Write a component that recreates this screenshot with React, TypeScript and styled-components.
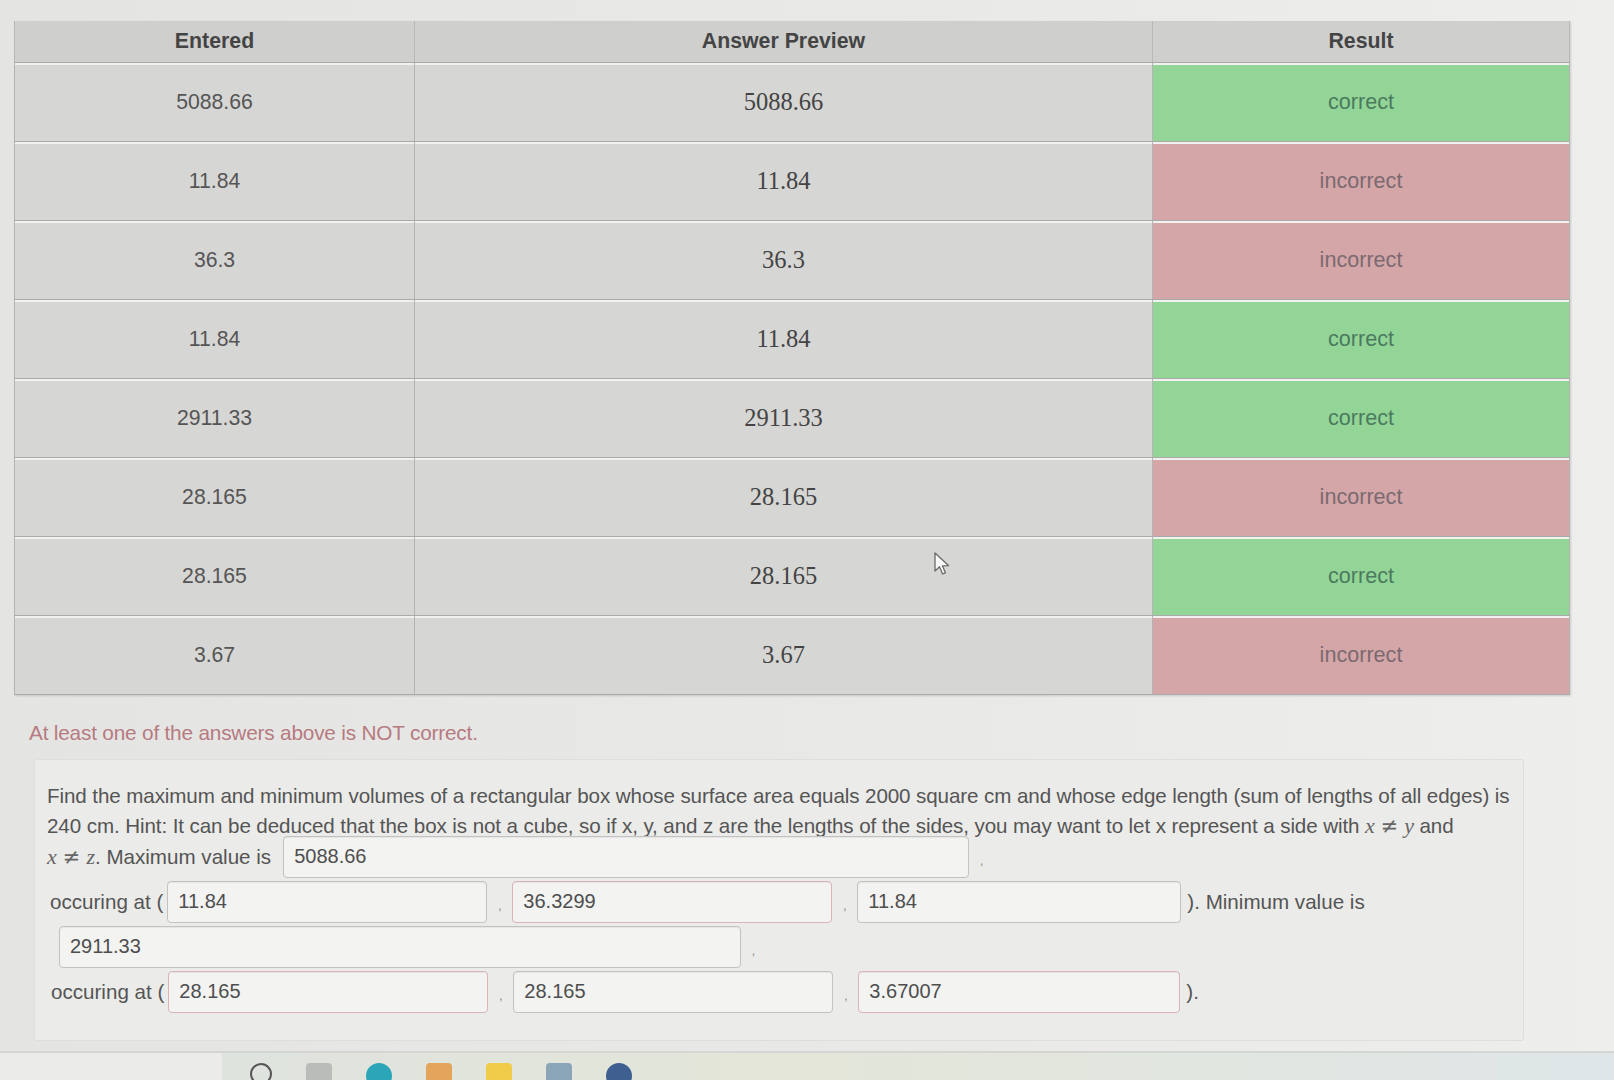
import React from "react";
import styled, { createGlobalStyle } from "styled-components";

const GlobalStyle = createGlobalStyle`
  html, body {
    margin: 0;
    padding: 0;
    background: #e7e8e6;
  }
  body {
    font-family: "Liberation Sans", Arial, sans-serif;
    color: #555;
  }
`;

const Page = styled.div`
  position: relative;
  height: 1080px;
  overflow: hidden;
  display: flex;
  flex-direction: column;
  background: linear-gradient(90deg, #e4e5e3 0%, #e9eae8 60%, #eeeeec 100%);
`;

const Content = styled.div`
  padding: 21px 0 0 14px;
`;

const Table = styled.table`
  width: 1552px;
  border-collapse: collapse;
  table-layout: fixed;
  box-shadow: 1px 1px 2px rgba(0, 0, 0, 0.15);
`;

const Th = styled.th<{ $w: number }>`
  width: ${(p) => p.$w}px;
  height: 41px;
  background: #cfcfcd;
  color: #444;
  font-size: 21.3px;
  font-weight: bold;
  text-align: center;
  border-left: 1px solid #b9b9b7;
  border-right: 1px solid #b9b9b7;
  border-bottom: 1px solid #a9a9a7;
  padding: 0;
`;

const Td = styled.td<{ $serif?: boolean }>`
  height: 78px;
  background: #d6d6d4;
  color: ${(p) => (p.$serif ? "#444" : "#555")};
  font-family: ${(p) =>
    p.$serif
      ? `"Liberation Serif", "Times New Roman", serif`
      : `"Liberation Sans", Arial, sans-serif`};
  font-size: ${(p) => (p.$serif ? "24.5px" : "21.2px")};
  text-align: center;
  border-left: 1px solid #b4b4b2;
  border-right: 1px solid #b4b4b2;
  border-bottom: 1px solid #aaaaa8;
  box-shadow: inset 0 2px 0 #f1f1ef;
  padding: 0;
`;

const ResultTd = styled.td<{ $ok: boolean }>`
  height: 78px;
  background: ${(p) => (p.$ok ? "#92d597" : "#d4a6a8")};
  color: ${(p) => (p.$ok ? "#4b7a5f" : "#7b6a70")};
  font-size: 21.6px;
  text-align: center;
  border-bottom: 1px solid #aaaaa8;
  border-right: 1px solid #b4b4b2;
  box-shadow: inset 0 2px 0 #f1f1ef;
  padding: 0;
`;

const Message = styled.div`
  margin: 26px 0 0 15px;
  font-size: 20.8px;
  color: #b67a80;
  letter-spacing: -0.2px;
`;

const ProblemBox = styled.div`
  margin: 14px 0 0 20px;
  width: 1490px;
  box-sizing: border-box;
  padding: 21px 12px 26px 12px;
  background: #ebebe9;
  border: 1px solid #dededc;
  border-radius: 3px;
  font-size: 20.6px;
  color: #555;
`;

const TextLine = styled.div`
  line-height: 30px;
  white-space: nowrap;
  letter-spacing: -0.1px;
`;

const AnswerRow = styled.div<{ $first?: boolean }>`
  height: 45px;
  margin-top: ${(p) => (p.$first ? "-7px" : "0")};
  display: flex;
  align-items: center;
  white-space: nowrap;
`;

const Label = styled.span<{ $indent?: number; $gap?: number }>`
  padding-left: ${(p) => p.$indent ?? 0}px;
  margin-right: ${(p) => p.$gap ?? 4}px;
`;

const Sep = styled.span`
  width: 25px;
  text-align: center;
  font-size: 12px;
  color: #888;
  padding-top: 8px;
`;

const Tail = styled.span`
  margin-left: 6px;
`;

const Field = styled.div<{ $w: number; $bad?: boolean }>`
  width: ${(p) => p.$w}px;
  height: 42px;
  box-sizing: border-box;
  display: flex;
  align-items: center;
  padding: 0 10px;
  background: #f3f3f2;
  border: 1px solid ${(p) => (p.$bad ? "#d9b4b7" : "#c2c2c0")};
  border-radius: 4px;
  box-shadow: inset 0 1px 1px rgba(0, 0, 0, 0.06);
  font-size: 20px;
  color: #4e4e4e;
`;

const MathVar = styled.span`
  font-family: "Liberation Serif", "Times New Roman", serif;
  font-style: italic;
  font-size: 22px;
  color: #666;
`;

const MathOp = styled.span`
  font-family: "DejaVu Sans", sans-serif;
  font-size: 21px;
  color: #666;
  margin: 0 6px;
`;

const Taskbar = styled.div`
  margin-top: auto;
  height: 27px;
  display: flex;
  border-top: 2px solid #d5d5d3;
  overflow: hidden;
`;

const TaskBlank = styled.div`
  width: 222px;
  background: #ebebe9;
`;

const TaskTray = styled.div`
  flex: 1;
  display: flex;
  gap: 34px;
  padding: 10px 0 0 28px;
  background: linear-gradient(90deg, #dfe3de 0%, #e3e6d8 40%, #dfe6e8 100%);
`;

const TaskIcon = styled.div<{ $c: string; $round?: boolean; $ring?: boolean }>`
  width: ${(p) => (p.$ring ? "18px" : "26px")};
  height: ${(p) => (p.$ring ? "18px" : "26px")};
  border-radius: ${(p) => (p.$round || p.$ring ? "50%" : "4px")};
  border: ${(p) => (p.$ring ? "2px solid #555" : "none")};
  background: ${(p) => p.$c};
`;

const Cursor = styled.svg`
  position: absolute;
  left: 934px;
  top: 552px;
`;

type Row = { entered: string; preview: string; ok: boolean };

const rows: Row[] = [
  { entered: "5088.66", preview: "5088.66", ok: true },
  { entered: "11.84", preview: "11.84", ok: false },
  { entered: "36.3", preview: "36.3", ok: false },
  { entered: "11.84", preview: "11.84", ok: true },
  { entered: "2911.33", preview: "2911.33", ok: true },
  { entered: "28.165", preview: "28.165", ok: false },
  { entered: "28.165", preview: "28.165", ok: true },
  { entered: "3.67", preview: "3.67", ok: false },
];

const NotEq: React.FC<{ a: string; b: string }> = ({ a, b }) => (
  <>
    <MathVar>{a}</MathVar>
    <MathOp>≠</MathOp>
    <MathVar>{b}</MathVar>
  </>
);

export default function App() {
  return (
    <Page>
      <GlobalStyle />
      <Content>
        <Table>
          <thead>
            <tr>
              <Th $w={399}>Entered</Th>
              <Th $w={737}>Answer Preview</Th>
              <Th $w={416}>Result</Th>
            </tr>
          </thead>
          <tbody>
            {rows.map((r, i) => (
              <tr key={i}>
                <Td>{r.entered}</Td>
                <Td $serif>{r.preview}</Td>
                <ResultTd $ok={r.ok}>{r.ok ? "correct" : "incorrect"}</ResultTd>
              </tr>
            ))}
          </tbody>
        </Table>

        <Message>At least one of the answers above is NOT correct.</Message>

        <ProblemBox>
          <TextLine>
            Find the maximum and minimum volumes of a rectangular box whose surface area
            equals 2000 square cm and whose edge length (sum of lengths of all edges) is
          </TextLine>
          <TextLine>
            240 cm. Hint: It can be deduced that the box is not a cube, so if x, y, and z are
            the lengths of the sides, you may want to let x represent a side with{" "}
            <NotEq a="x" b="y" /> and
          </TextLine>
          <AnswerRow $first>
            <Label $gap={12}>
              <NotEq a="x" b="z" />. Maximum value is
            </Label>
            <Field $w={686}>5088.66</Field>
            <Sep>,</Sep>
          </AnswerRow>
          <AnswerRow>
            <Label $indent={3}>occuring at (</Label>
            <Field $w={320}>11.84</Field>
            <Sep>,</Sep>
            <Field $w={320} $bad>36.3299</Field>
            <Sep>,</Sep>
            <Field $w={324}>11.84</Field>
            <Tail>). Minimum value is</Tail>
          </AnswerRow>
          <AnswerRow>
            <Label $indent={8} />
            <Field $w={682}>2911.33</Field>
            <Sep>,</Sep>
          </AnswerRow>
          <AnswerRow>
            <Label $indent={4}>occuring at (</Label>
            <Field $w={320} $bad>28.165</Field>
            <Sep>,</Sep>
            <Field $w={320}>28.165</Field>
            <Sep>,</Sep>
            <Field $w={322} $bad>3.67007</Field>
            <Tail>).</Tail>
          </AnswerRow>
        </ProblemBox>
      </Content>

      <Taskbar>
        <TaskBlank />
        <TaskTray>
          <TaskIcon $c="transparent" $ring />
          <TaskIcon $c="#b9bcb8" />
          <TaskIcon $c="#2aa6b8" $round />
          <TaskIcon $c="#e3a55a" />
          <TaskIcon $c="#f0cc4a" />
          <TaskIcon $c="#8aa5b8" />
          <TaskIcon $c="#3e5f90" $round />
        </TaskTray>
      </Taskbar>

      <Cursor width="18" height="26" viewBox="0 0 18 26">
        <path
          d="M1 1 L1 19 L5.5 14.8 L8.6 22 L11.4 20.8 L8.4 13.8 L14.5 13.6 Z"
          fill="#fafafa"
          stroke="#6a6a6a"
          strokeWidth="1.3"
          strokeLinejoin="round"
        />
      </Cursor>
    </Page>
  );
}
